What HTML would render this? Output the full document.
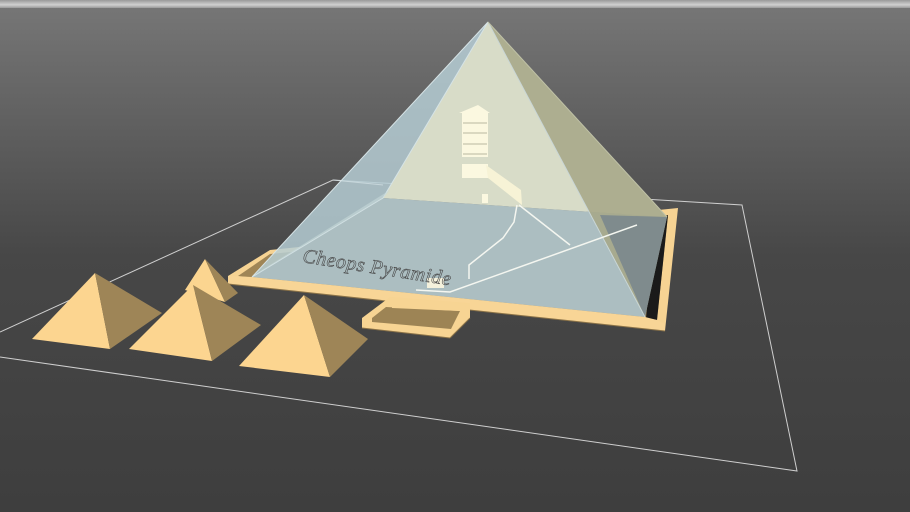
<!DOCTYPE html>
<html><head><meta charset="utf-8"><style>
html,body{margin:0;padding:0;width:910px;height:512px;overflow:hidden;background:#444}
svg{display:block}
</style></head><body>
<svg width="910" height="512" viewBox="0 0 910 512" xmlns="http://www.w3.org/2000/svg">
<defs>
<linearGradient id="bg" x1="0" y1="0" x2="0" y2="1">
<stop offset="0" stop-color="#777"/>
<stop offset="0.5" stop-color="#474747"/>
<stop offset="1" stop-color="#3e3e3e"/>
</linearGradient>
<linearGradient id="top" x1="0" y1="0" x2="0" y2="1">
<stop offset="0" stop-color="#999"/>
<stop offset="0.6" stop-color="#d0d0d0"/>
<stop offset="1" stop-color="#9a9a9a"/>
</linearGradient>
</defs>
<rect width="910" height="512" fill="url(#bg)"/>
<rect width="910" height="8" fill="url(#top)"/>
<polyline points="0,332 333,180 742,205 797,471 0,357" fill="none" stroke="#cfcfcf" stroke-width="1"/>

<!-- platform -->
<polygon points="228,276 270,250 678,208 665,331 228,284" fill="#f6d393"/>
<polygon points="238,276 270,254 668,215 657,320" fill="#9f8556"/>
<polygon points="252,277 383,198 667,217 645,317" fill="#a6b7b9"/>
<polygon points="655,222 668,215 657,320 646,318" fill="#1a1a1a"/>
<polygon points="228,276 252,277 645,317 657,320 665,324 665,331 228,284" fill="#f8d596"/>
<line x1="228" y1="284" x2="665" y2="331" stroke="#8a7248" stroke-width="1"/>

<!-- enclosure -->
<polygon points="390,297 470,303 470,318 450,338 362,328 362,318" fill="#f7d493"/>
<polygon points="372,318 386,307 460,311 451,329 372,322" fill="#9d8455"/>
<polygon points="392,297 468,304 460,311 392,308" fill="#f7d493"/>
<line x1="362" y1="328" x2="450" y2="338" stroke="#8a7248"/>
<line x1="450" y1="338" x2="470" y2="318" stroke="#8a7248"/>

<!-- big pyramid -->
<polygon points="488,22 383,198 667,217" fill="#dcdcc1"/>
<polygon points="488,22 667,217 645,317" fill="#a7a88b" opacity="0.9"/>
<polygon points="600,215 667,217 645,317" fill="#7f8b8d"/>
<polygon points="488,22 383,198 252,277" fill="#b3cbd1" opacity="0.8"/>
<line x1="333" y1="180" x2="383" y2="185" stroke="#d8e4e6" stroke-width="1" opacity="0.7"/>
<polygon points="488,22 252,277 383,198" fill="none" stroke="#d8e4e6" stroke-width="1"/>
<polygon points="488,22 252,277 645,317" fill="#c8e0e8" opacity="0.18"/>
<line x1="488" y1="22" x2="645" y2="317" stroke="#c9d6d6" stroke-width="1"/>
<line x1="488" y1="22" x2="667" y2="217" stroke="#bfc1a6" stroke-width="1"/>
<polygon points="252,277 383,198 390,190 262,270" fill="#c7d9d9" opacity="0.6"/>

<!-- chambers -->
<polygon points="459,113 478,105 490,113" fill="#fbf8e0"/>
<rect x="462" y="113" width="26" height="44" fill="#fbf8e0"/>
<g stroke="#b9b8a0" stroke-width="1"><line x1="463" y1="123" x2="487" y2="123"/><line x1="463" y1="133" x2="487" y2="133"/><line x1="463" y1="144" x2="487" y2="144"/><line x1="463" y1="154" x2="487" y2="154"/></g>
<rect x="462" y="164" width="26" height="14" fill="#fbf8e0"/>
<polygon points="486,165 521,190 522,205 488,178" fill="#f7f3d6"/>
<rect x="482" y="194" width="6" height="9" fill="#fbf8e0"/>
<polyline points="517,205 514,222 503,238 469,265 469,279" fill="none" stroke="#f4f6f0" stroke-width="1.5"/>
<polyline points="519,205 570,245" fill="none" stroke="#f4f6f0" stroke-width="1.5"/>
<polyline points="637,225 450,292 416,290" fill="none" stroke="#f4f6f0" stroke-width="1.5"/>
<rect x="427" y="278" width="17" height="10" fill="#f4f1dc"/>
<text x="302" y="262" transform="rotate(9 302 262)" font-family="Liberation Serif, serif" font-style="italic" font-size="20" fill="none" stroke="#4a4a4a" stroke-width="0.6" letter-spacing="0.5">Cheops Pyramide</text>

<!-- small pyramids -->
<g>
<polygon points="205,259 185,290 225,302" fill="#fbd590"/>
<polygon points="205,259 225,302 238,293" fill="#9e8557"/>
<polygon points="95,273 32,339 110,349" fill="#fcd590"/>
<polygon points="95,273 110,349 162,313" fill="#9e8557"/>
<polygon points="193,285 129,349 212,361" fill="#fcd590"/>
<polygon points="193,285 212,361 261,325" fill="#9e8557"/>
<polygon points="304,295 239,366 330,377" fill="#fcd590"/>
<polygon points="304,295 330,377 368,339" fill="#9e8557"/>
</g>
</svg>
</body></html>
